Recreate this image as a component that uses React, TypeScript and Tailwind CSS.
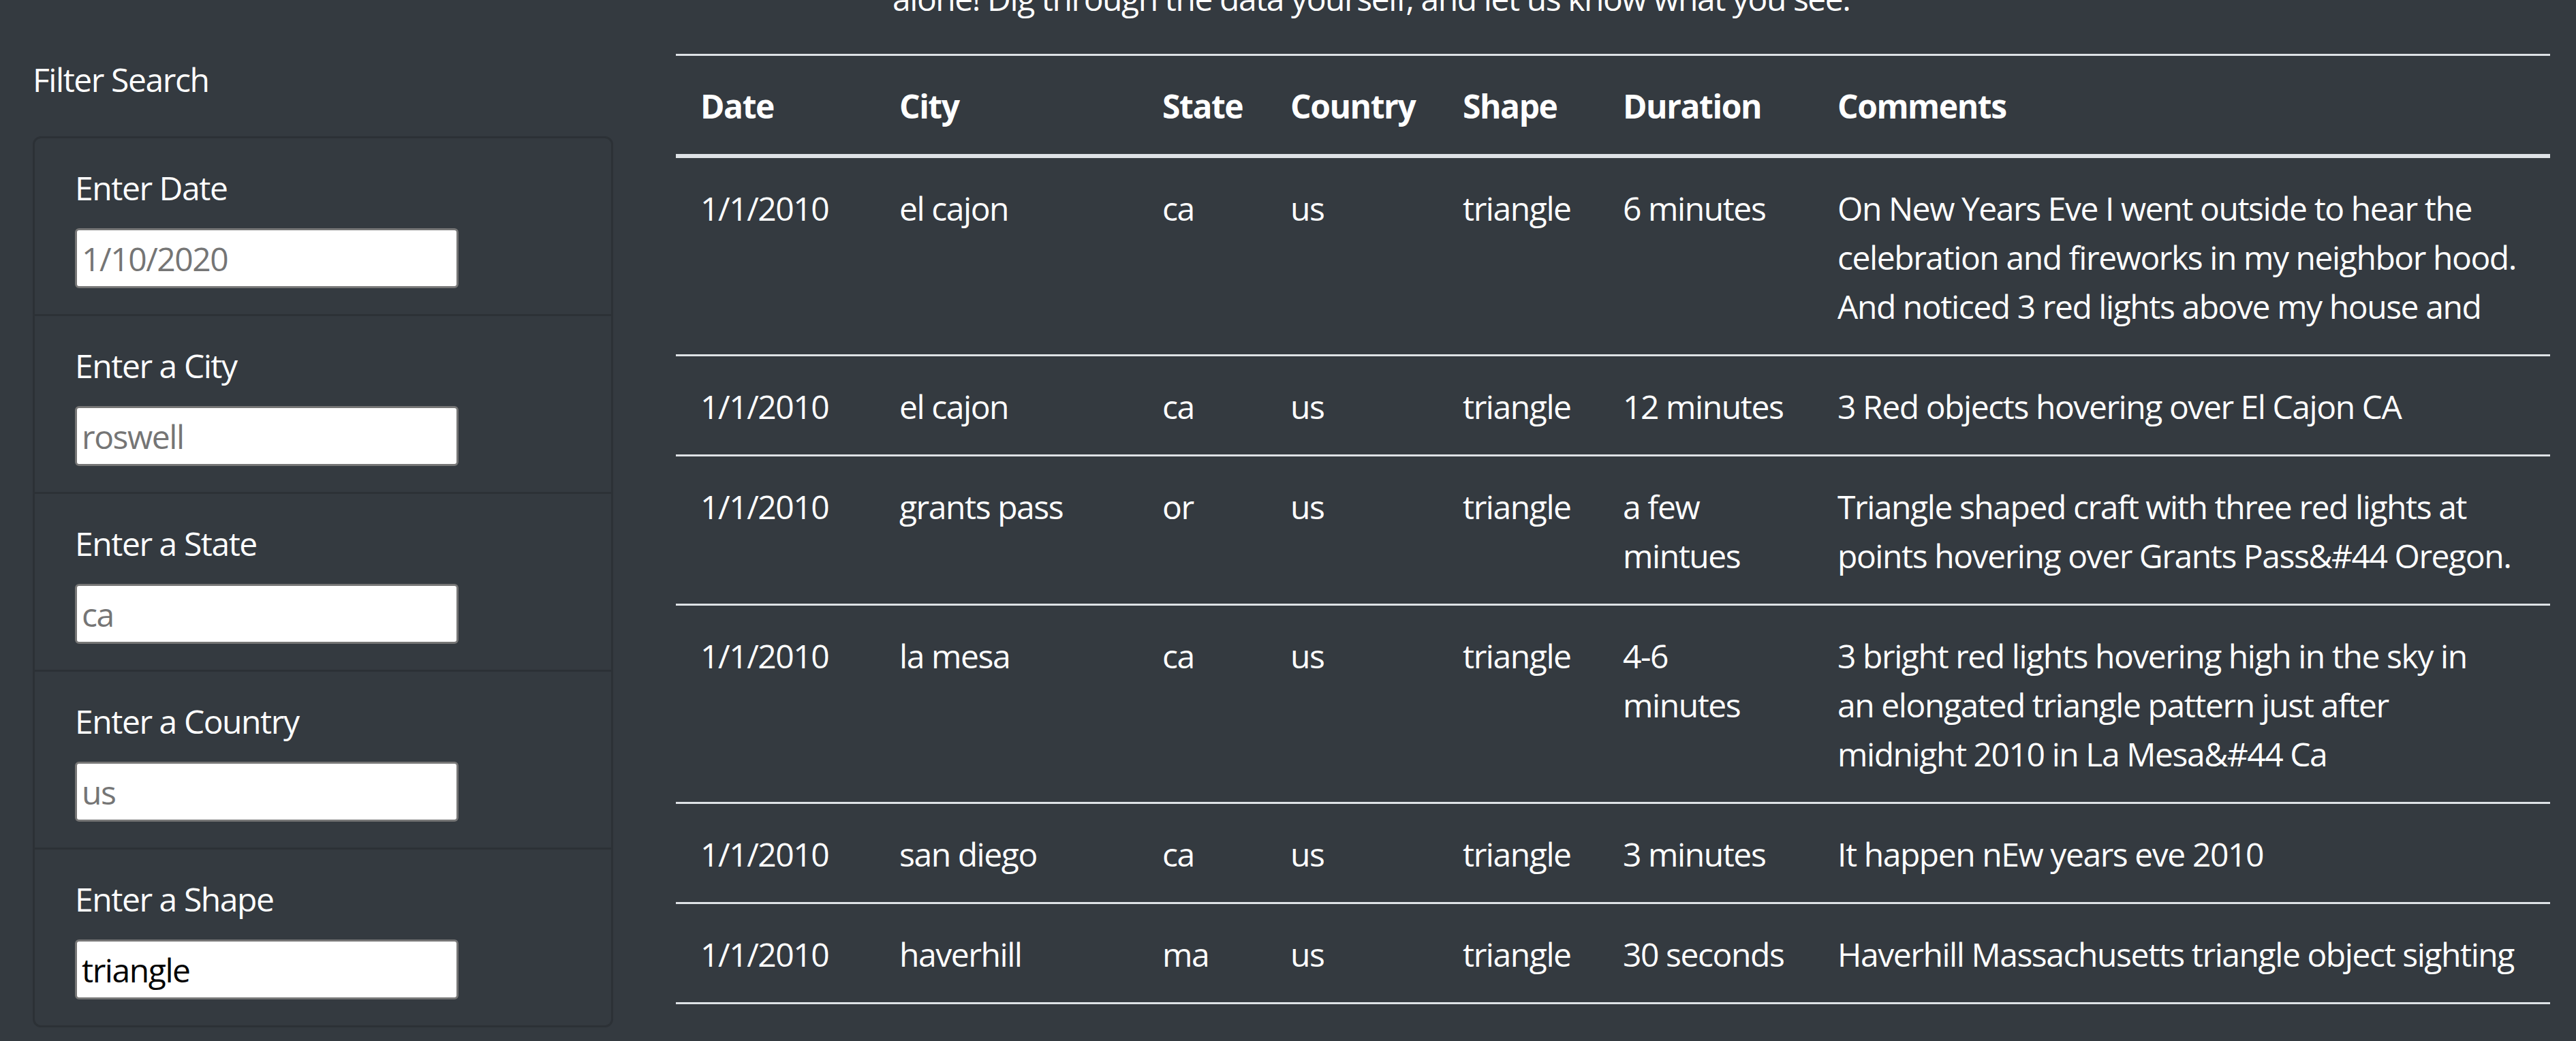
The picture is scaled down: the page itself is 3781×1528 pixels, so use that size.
import React from "react";

type Sighting = {
  date: string;
  city: string;
  state: string;
  country: string;
  shape: string;
  duration: string;
  comments: string;
};

// line breaks are kept as they wrap in the original table
const sightings: Sighting[] = [
  {
    date: "1/1/2010",
    city: "el cajon",
    state: "ca",
    country: "us",
    shape: "triangle",
    duration: "6 minutes",
    comments:
      "On New Years Eve I went outside to hear the\ncelebration and fireworks in my neighbor hood.\nAnd noticed 3 red lights above my house and",
  },
  {
    date: "1/1/2010",
    city: "el cajon",
    state: "ca",
    country: "us",
    shape: "triangle",
    duration: "12 minutes",
    comments: "3 Red objects hovering over El Cajon CA",
  },
  {
    date: "1/1/2010",
    city: "grants pass",
    state: "or",
    country: "us",
    shape: "triangle",
    duration: "a few\nmintues",
    comments: "Triangle shaped craft with three red lights at\npoints hovering over Grants Pass&#44 Oregon.",
  },
  {
    date: "1/1/2010",
    city: "la mesa",
    state: "ca",
    country: "us",
    shape: "triangle",
    duration: "4-6\nminutes",
    comments:
      "3 bright red lights hovering high in the sky in\nan elongated triangle pattern just after\nmidnight 2010 in La Mesa&#44 Ca",
  },
  {
    date: "1/1/2010",
    city: "san diego",
    state: "ca",
    country: "us",
    shape: "triangle",
    duration: "3 minutes",
    comments: "It happen nEw years eve 2010",
  },
  {
    date: "1/1/2010",
    city: "haverhill",
    state: "ma",
    country: "us",
    shape: "triangle",
    duration: "30 seconds",
    comments: "Haverhill Massachusetts triangle object sighting",
  },
];

const filters = [
  { id: "datetime", label: "Enter Date", placeholder: "1/10/2020", value: "" },
  { id: "city", label: "Enter a City", placeholder: "roswell", value: "" },
  { id: "state", label: "Enter a State", placeholder: "ca", value: "" },
  { id: "country", label: "Enter a Country", placeholder: "us", value: "" },
  { id: "shape", label: "Enter a Shape", placeholder: "circle", value: "triangle" },
];

const columns = [
  { key: "date", title: "Date", width: "w-[292px]" },
  { key: "city", title: "City", width: "w-[386px]" },
  { key: "state", title: "State", width: "w-[188px]" },
  { key: "country", title: "Country", width: "w-[253px]" },
  { key: "shape", title: "Shape", width: "w-[235px]" },
  { key: "duration", title: "Duration", width: "w-[315px]" },
  { key: "comments", title: "Comments", width: "w-[1082px]" },
] as const;

function FilterPanel() {
  return (
    <aside className="w-[900px] shrink-0 pl-[48px]">
      <div className="mb-[47px] pt-[2px]">Filter Search</div>
      <div className="rounded-[12px] border-[3px] border-[#2c3136]">
        {filters.map((f) => (
          <div
            key={f.id}
            className="border-b-[3px] border-[#2c3136] px-[59px] pt-[36px] pb-[38px] last:border-b-0"
          >
            <label htmlFor={f.id} className="mb-[24px] block pt-[2px] leading-[70px]">
              {f.label}
            </label>
            <input
              id={f.id}
              type="text"
              placeholder={f.placeholder}
              defaultValue={f.value}
              className="block h-[88px] w-[563px] rounded-[6px] border-[3px] border-[#767676] bg-white px-[7px] text-[48px] leading-normal text-black outline-none placeholder:text-[#757575]"
            />
          </div>
        ))}
      </div>
    </aside>
  );
}

function SightingsTable() {
  return (
    <main className="ml-[92px] w-[2751px] shrink-0">
      <table className="w-[2751px] table-fixed border-separate border-spacing-0">
        <thead>
          <tr>
            {columns.map((c) => (
              <th
                key={c.key}
                className={`${c.width} border-t-[3px] border-b-[6px] border-[#dee2e6] px-[36px] pt-[38px] pb-[34px] text-left align-bottom font-bold`}
              >
                {c.title}
              </th>
            ))}
          </tr>
        </thead>
        <tbody>
          {sightings.map((s, i) => (
            <tr key={i}>
              {columns.map((c) => (
                <td
                  key={c.key}
                  className="border-b-[3px] border-[#dee2e6] px-[36px] pt-[38px] pb-[34px] align-top whitespace-pre-line"
                >
                  {s[c.key]}
                </td>
              ))}
            </tr>
          ))}
        </tbody>
      </table>
    </main>
  );
}

export default function App() {
  return (
    <div className="h-[1528px] overflow-hidden bg-[#343a40] font-['Open_Sans',sans-serif] text-[48px] leading-[72px] tracking-[-0.03em] text-white">
      <p className="-mt-[38px] mb-[45px] whitespace-nowrap pl-[1310px]">
        alone! Dig through the data yourself, and let us know what you see.
      </p>
      <div className="flex">
        <FilterPanel />
        <SightingsTable />
      </div>
    </div>
  );
}
